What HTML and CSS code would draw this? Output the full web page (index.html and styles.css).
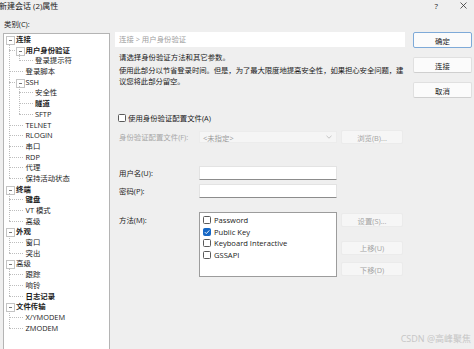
FILE: index.html
```html
<!DOCTYPE html>
<html lang="zh-CN">
<head>
    <meta charset="UTF-8">
    <meta name="viewport" content="width=device-width, initial-scale=1.0">
    <title>新建会话 (2)属性</title>
    <link rel="stylesheet" href="styles.css">
</head>
<body>
    <div class="titlebar">
        <span class="title">新建会话 (2)属性</span>
        <span class="help">?</span>
        <span class="close">
            <svg width="7" height="7" viewBox="0 0 7 7"><path d="M0.5 0.5L6.5 6.5M6.5 0.5L0.5 6.5" stroke="#333" stroke-width="0.8" fill="none"/></svg>
        </span>
    </div>

    <div class="main">
        <div class="category">
            <div class="cat-label">类别(C):</div>
            <div class="tree">
                <ul>
                    <li><div class="row l0 open b">连接</div>
                        <ul class="kids k0">
                            <li><div class="row l1 open b">用户身份验证</div>
                                <ul class="kids k1">
                                    <li><div class="row l2">登录提示符</div></li>
                                </ul>
                            </li>
                            <li><div class="row l1">登录脚本</div></li>
                            <li><div class="row l1 open">SSH</div>
                                <ul class="kids k1">
                                    <li><div class="row l2">安全性</div></li>
                                    <li><div class="row l2 b">隧道</div></li>
                                    <li><div class="row l2">SFTP</div></li>
                                </ul>
                            </li>
                            <li><div class="row l1">TELNET</div></li>
                            <li><div class="row l1">RLOGIN</div></li>
                            <li><div class="row l1">串口</div></li>
                            <li><div class="row l1">RDP</div></li>
                            <li><div class="row l1">代理</div></li>
                            <li><div class="row l1">保持活动状态</div></li>
                        </ul>
                    </li>
                    <li><div class="row l0 open b">终端</div>
                        <ul class="kids k0">
                            <li><div class="row l1 b">键盘</div></li>
                            <li><div class="row l1">VT 模式</div></li>
                            <li><div class="row l1">高级</div></li>
                        </ul>
                    </li>
                    <li><div class="row l0 open b">外观</div>
                        <ul class="kids k0">
                            <li><div class="row l1">窗口</div></li>
                            <li><div class="row l1">突出</div></li>
                        </ul>
                    </li>
                    <li><div class="row l0 open">高级</div>
                        <ul class="kids k0">
                            <li><div class="row l1">跟踪</div></li>
                            <li><div class="row l1">响铃</div></li>
                            <li><div class="row l1 b">日志记录</div></li>
                        </ul>
                    </li>
                    <li><div class="row l0 open b">文件传输</div>
                        <ul class="kids k0">
                            <li><div class="row l1">X/YMODEM</div></li>
                            <li><div class="row l1">ZMODEM</div></li>
                        </ul>
                    </li>
                </ul>
            </div>
        </div>

        <div class="content">
            <div class="crumb">连接 &gt; 用户身份验证</div>
            <p class="intro">请选择身份验证方法和其它参数。</p>
            <p class="note">使用此部分以节省登录时间。但是，为了最大限度地提高安全性，如果担心安全问题，建<br>议您将此部分留空。</p>

            <label class="check-row"><span class="cb"></span>使用身份验证配置文件(A)</label>

            <div class="field profile">
                <span class="lbl disabled">身份验证配置文件(F):</span>
                <div class="combo">
                    <span>&lt;未指定&gt;</span>
                    <svg width="6" height="4" viewBox="0 0 6 4"><path d="M0.5 0.8L3 3.2L5.5 0.8" stroke="#b0b0b0" stroke-width="0.7" fill="none"/></svg>
                </div>
                <div class="btn flat">浏览(B)...</div>
            </div>

            <div class="field user">
                <span class="lbl">用户名(U):</span>
                <div class="input"></div>
            </div>
            <div class="field pass">
                <span class="lbl">密码(P):</span>
                <div class="input"></div>
            </div>

            <div class="field method">
                <span class="lbl">方法(M):</span>
                <div class="listbox">
                    <div class="opt"><span class="cb"></span>Password</div>
                    <div class="opt"><span class="cb on"><svg width="8" height="8" viewBox="0 0 8 8"><path d="M1.8 4.1L3.3 5.6L6.3 2.4" stroke="#fff" stroke-width="0.9" fill="none"/></svg></span>Public Key</div>
                    <div class="opt"><span class="cb"></span>Keyboard Interactive</div>
                    <div class="opt"><span class="cb"></span>GSSAPI</div>
                </div>
                <div class="side-btns">
                    <div class="btn flat set">设置(S)...</div>
                    <div class="btn flat up">上移(U)</div>
                    <div class="btn flat down">下移(D)</div>
                </div>
            </div>
        </div>

        <div class="actions">
            <button class="btn primary">确定</button>
            <button class="btn">连接</button>
            <button class="btn">取消</button>
        </div>
    </div>

    <div class="watermark">CSDN @高峰聚焦</div>
</body>
</html>
```

FILE: styles.css
```css
* {
    box-sizing: border-box;
}
body {
    margin: 0;
    height: 349px;
    overflow: hidden;
    background-color: #efefef;
    color: #1a1a1a;
    font-family: "Open Sans", "Noto Sans CJK SC", sans-serif;
    font-size: 7.4px;
    position: relative;
}

/* title bar */
.titlebar {
    height: 19px;
    display: flex;
    align-items: flex-start;
}
.title {
    margin-left: -1px;
    font-size: 8px;
    line-height: 11px;
}
.help {
    margin-left: auto;
    font-size: 8px;
    line-height: 11px;
}
.close {
    margin-left: 22px;
    margin-right: 7px;
    padding-top: 2px;
    line-height: 0;
}

.main {
    display: flex;
    padding-left: 3px;
}

/* category tree */
.category {
    width: 107px;
}
.cat-label {
    line-height: 10px;
    margin-left: 1px;
    margin-bottom: 4px;
}
.tree {
    height: 330px;
    background: #fff;
    border: 1px solid #b4b4b4;
    overflow: hidden;
}
.tree ul {
    list-style: none;
    margin: 0;
    padding: 0;
}
.row {
    position: relative;
    height: 10.7px;
    line-height: 10.7px;
    white-space: nowrap;
}
.row.b {
    font-weight: bold;
}
.l0 { padding-left: 12px; }
.l1 { padding-left: 21.5px; }
.l2 { padding-left: 31px; }

.l1::before,
.l2::before {
    content: "";
    position: absolute;
    top: 5px;
    width: 14px;
    border-top: 1px dotted #bdbdbd;
}
.l1::before { left: 5px; }
.l2::before { left: 15px; }

.row.open::after {
    content: "";
    position: absolute;
    top: 2px;
    width: 7px;
    height: 7px;
    border: 1px solid #c4c4c4;
    background: linear-gradient(#777, #777) center / 3px 1px no-repeat, #fff;
}
.l0.open::after { left: 2px; }
.l1.open::after { left: 12px; }

.kids {
    position: relative;
}
.kids::before {
    content: "";
    position: absolute;
    top: -1px;
    bottom: 5.35px;
    border-left: 1px dotted #bdbdbd;
}
.k0::before { left: 5px; }
.k1::before { left: 15px; }

/* right content */
.content {
    width: 291px;
    margin-left: 5px;
    padding-top: 13px;
}
.crumb {
    width: 290px;
    height: 15px;
    line-height: 15px;
    padding-left: 4px;
    background: #fff;
    color: #a0a0a0;
}
.intro,
.note {
    margin: 0;
    padding-left: 4px;
    white-space: nowrap;
}
.intro {
    margin-top: 5px;
    line-height: 10px;
}
.note {
    margin-top: 3px;
    line-height: 11px;
    letter-spacing: -0.1px;
}

.cb {
    display: inline-block;
    width: 8px;
    height: 8px;
    border: 1px solid #5a5a5a;
    border-radius: 1.5px;
    background: #fff;
    margin-right: 3px;
    line-height: 0;
    flex: none;
}
.cb.on {
    background: #1667c5;
    border-color: #1667c5;
}
.cb.on svg {
    margin: -1px 0 0 -1px;
}

.check-row {
    display: flex;
    align-items: center;
    height: 10px;
    margin-top: 25.5px;
    padding-left: 3px;
}
.check-row .cb {
    margin-right: 2px;
}

.field {
    display: flex;
    align-items: center;
    padding-left: 4px;
}
.lbl {
    width: 80px;
    flex: none;
    line-height: 10px;
}
.disabled {
    color: #a8a8a8;
}

.profile {
    margin-top: 7.5px;
    height: 14px;
}
.combo {
    width: 138px;
    height: 12px;
    display: flex;
    align-items: center;
    justify-content: space-between;
    padding: 0 4px 0 3px;
    background: #f5f5f5;
    border: 1px solid #ececec;
    color: #9a9a9a;
}
.combo svg {
    display: block;
}

.btn {
    font-family: inherit;
    font-size: 7.4px;
    display: flex;
    align-items: center;
    justify-content: center;
    border-radius: 2px;
}
.btn.flat {
    width: 62px;
    height: 14px;
    margin-left: 4px;
    background: #f6f6f6;
    border: 1px solid #ebebeb;
    color: #a4a4a4;
}

.user {
    margin-top: 22px;
}
.pass {
    margin-top: 4px;
}
.input {
    width: 138px;
    height: 14px;
    background: #fff;
    border: 1px solid #e3e3e3;
    border-bottom-color: #8c8c8c;
    border-radius: 1px;
}

.method {
    margin-top: 14px;
    align-items: flex-start;
}
.method .lbl {
    margin-top: 3px;
}
.listbox {
    width: 138px;
    height: 65px;
    background: #fff;
    border: 1px solid #9c9c9c;
    padding: 1px 0 0 3px;
}
.opt {
    display: flex;
    align-items: center;
    height: 11.7px;
    font-size: 7.6px;
}
.side-btns .set { margin-top: 1px; }
.side-btns .up { margin-top: 14px; height: 13.5px; }
.side-btns .down { margin-top: 7.5px; }

/* dialog buttons */
.actions {
    width: 59px;
    margin-left: 7px;
    padding-top: 13px;
}
.actions .btn {
    width: 59px;
    height: 16px;
    margin: 0 0 9px 0;
    padding: 0;
    background: #fbfbfb;
    border: 1px solid #e0e0e0;
    border-bottom-color: #cfcfcf;
    color: #1a1a1a;
}
.actions .btn.primary {
    border: 1px solid #7eaad8;
}

.watermark {
    position: absolute;
    right: 3px;
    bottom: 5px;
    font-size: 9px;
    line-height: 11px;
    color: #c6c6c6;
}
```
